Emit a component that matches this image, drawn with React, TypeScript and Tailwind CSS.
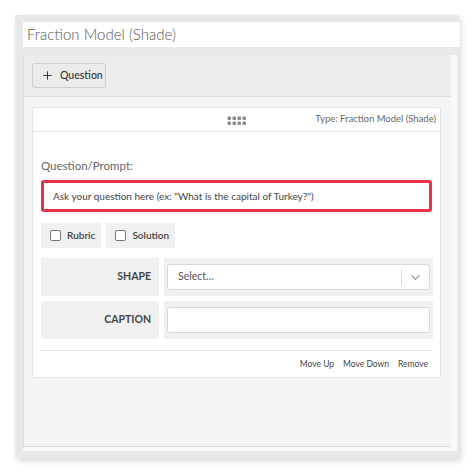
import { ChevronDown, Plus } from "lucide-react"

const font = { fontFamily: "Lato, 'Open Sans', Arial, sans-serif" }

const DragDots = () => (
    <svg width="20" height="9" viewBox="0 0 20 9">
        {[0, 1].map(r =>
            [0, 1, 2, 3].map(c => (
                <rect key={`${r}-${c}`} x={c * 5 + 0.5} y={r * 5 + 0.5} width="3.5" height="3.5" rx="1" fill="#8a8a8a" />
            ))
        )}
    </svg>
)

const Check = ({ label }: { label: string }) => (
    <div className="flex items-center gap-[6px] h-[25px] bg-[#f0f0f0] pl-[9px] pr-[6px] text-[10px] text-[#444] font-semibold">
        <span className="w-[11px] h-[11px] border border-[#777] rounded-[2px] bg-white"></span>
        {label}
    </div>
)

export default function App() {
    return (
        <div className="w-[474px] h-[474px] bg-white pt-[15px] pl-[15px]" style={font}>
            <div className="w-[444px] h-[443px] bg-[#e8e8e8] pl-[8px] pt-[7px] flex flex-col shadow-[2px_3px_6px_rgba(0,0,0,0.15)]">
                <div className="h-[25px] w-[437px] bg-white flex items-center pl-[4px] text-[15px] text-[#555] font-light">
                    Fraction Model (Shade)
                </div>
                <div className="mt-[8px] w-[434px] h-[396px] border-r-[6px] border-b-[4px] border-[#f9f9f9] flex flex-col">
                    <div className="flex-1 border-l border-b border-[#dcdcdc] flex flex-col">
                        <div className="h-[42px] bg-[#ececec] border-b border-[#dedede] flex items-center pl-[8px]">
                            <button className="h-[25px] w-[74px] flex items-center gap-[6px] pl-[8px] border border-[#cdcdcd] rounded-[3px] bg-[#ebebeb] text-[10.5px] font-medium text-[#333]">
                                <Plus size={13} strokeWidth={1.8} />
                                Question
                            </button>
                        </div>
                        <div className="flex-1 bg-[#f5f5f5] pt-[10px] pl-[8px]">
                            <div className="w-[409px] bg-white border border-[#e4e4e4] rounded-[2px]">
                                <div className="relative h-[24px] border-b border-[#e6e6e6] flex items-center justify-end pr-[4px] text-[9.5px] text-[#666]">
                                    <div className="absolute left-[194px] top-[8px]"><DragDots /></div>
                                    Type: Fraction Model (Shade)
                                </div>
                                <div className="pl-[8px] pr-[8px] pt-[27px]">
                                    <div className="text-[11.5px] text-[#666] leading-[14px]">Question/Prompt:</div>
                                    <div className="mt-[7px] w-[391px] h-[32px] border-[3px] border-[#e8324a] rounded-[3px] flex items-center pl-[9px] text-[10px] text-[#444]">
                                        Ask your question here (ex: "What is the capital of Turkey?")
                                    </div>
                                    <div className="mt-[11px] flex gap-[5px]">
                                        <Check label="Rubric" />
                                        <Check label="Solution" />
                                    </div>
                                    <div className="mt-[10px] flex flex-col gap-[5px] w-[392px]">
                                        <div className="flex gap-[5px] h-[38px]">
                                            <div className="w-[118px] bg-[#f0f0f0] flex items-center justify-end pr-[8px] text-[10.5px] font-bold text-[#444]">SHAPE</div>
                                            <div className="flex-1 bg-[#f0f0f0] p-[3px] flex items-center">
                                                <div className="h-[26px] w-full bg-white border border-[#d8d8d8] rounded-[3px] flex items-center pl-[10px] text-[10.5px] text-[#555]">
                                                    <span className="flex-1">Select...</span>
                                                    <span className="w-px h-[16px] bg-[#d8d8d8]"></span>
                                                    <ChevronDown size={15} className="mx-[6px] text-[#999]" />
                                                </div>
                                            </div>
                                        </div>
                                        <div className="flex gap-[5px] h-[38px]">
                                            <div className="w-[118px] bg-[#f0f0f0] flex items-center justify-end pr-[8px] text-[10.5px] font-bold text-[#444]">CAPTION</div>
                                            <div className="flex-1 bg-[#f0f0f0] p-[3px] flex items-center">
                                                <div className="h-[26px] w-full bg-white border border-[#d8d8d8] rounded-[3px]"></div>
                                            </div>
                                        </div>
                                    </div>
                                    <div className="mt-[11px] border-t border-[#e4e4e4] h-[27px] flex items-center justify-end gap-[9px] pr-[4px] text-[8.5px] text-[#444]">
                                        <span>Move Up</span>
                                        <span>Move Down</span>
                                        <span>Remove</span>
                                    </div>
                                </div>
                            </div>
                        </div>
                    </div>
                </div>
            </div>
        </div>
    )
}
